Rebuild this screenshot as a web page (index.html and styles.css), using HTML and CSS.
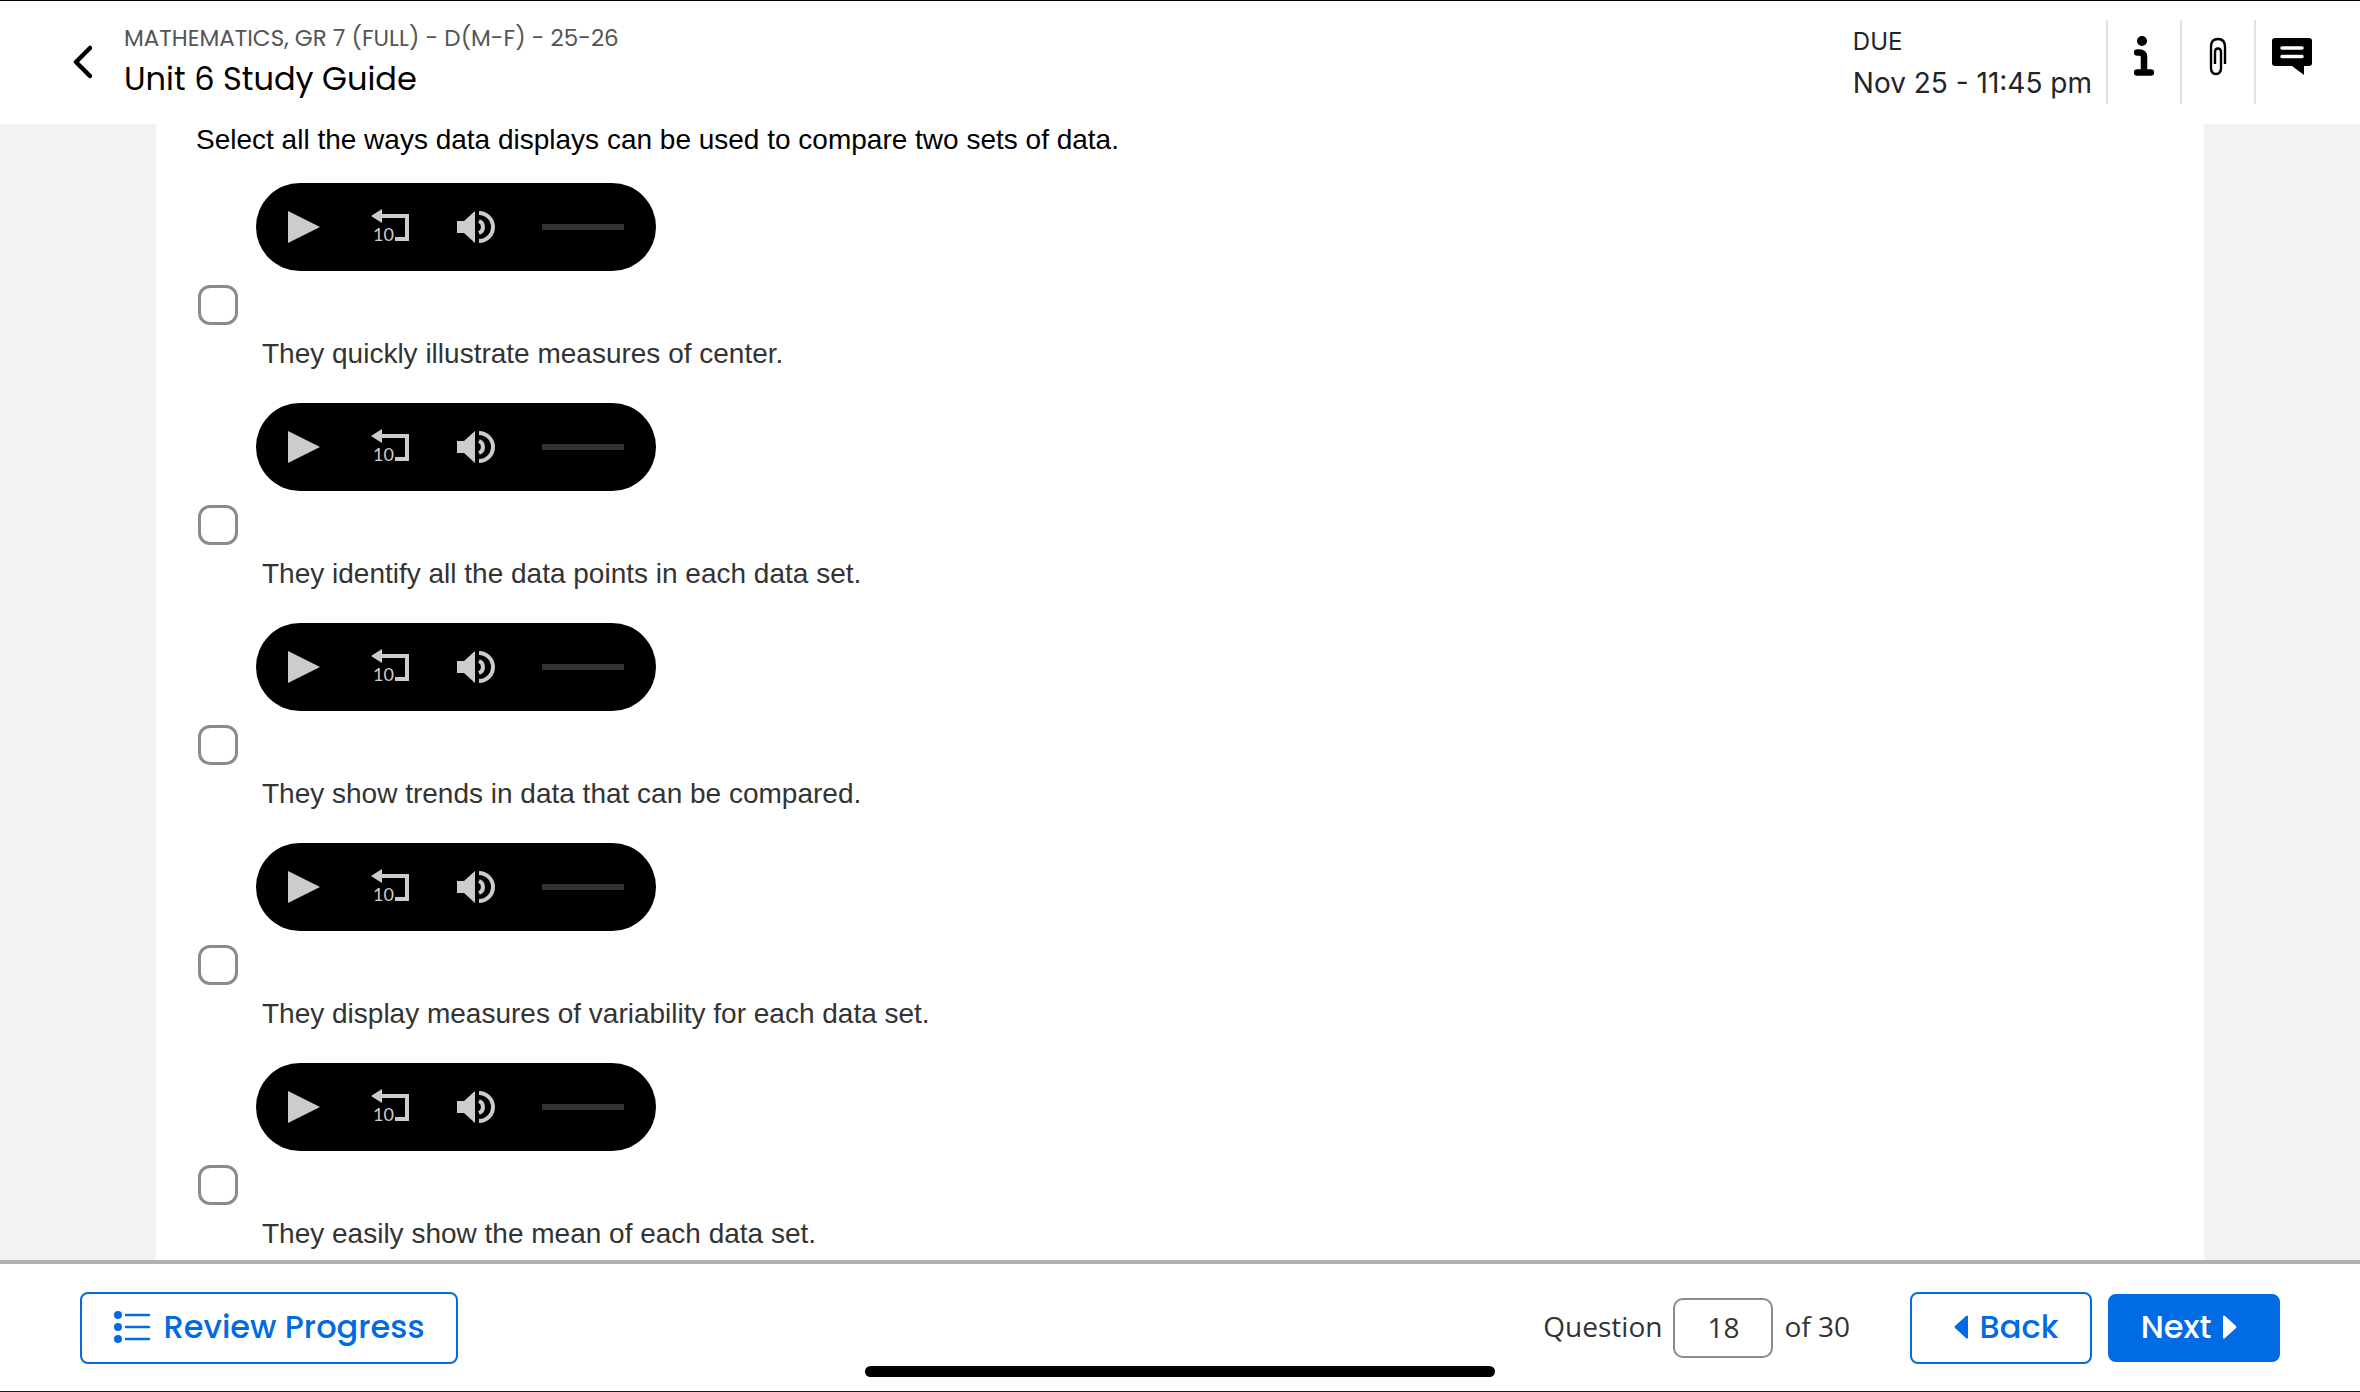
FILE: index.html
```html
<!DOCTYPE html>
<html lang="en">
<head>
  <meta charset="UTF-8">
  <meta name="viewport" content="width=device-width, initial-scale=1.0">
  <title>Unit 6 Study Guide</title>
  <link rel="stylesheet" href="styles.css">
</head>
<body>
  <!-- Icons shared by every audio player -->
  <svg class="sprite" aria-hidden="true">
    <symbol id="icon-play" viewBox="0 0 40 36"><path d="M4 2 L36 18 L4 34 Z"/></symbol>
    <symbol id="icon-rewind" viewBox="0 0 40 36">
      <path d="M1 7 L12 0 V5 H39 V32 H25 V28 H35 V9 H12 V14 Z"/>
      <text x="3" y="32" font-size="18">10</text>
    </symbol>
    <symbol id="icon-volume" viewBox="0 0 40 36">
      <path d="M1 12 H8 L19 2 V34 L8 24 H1 Z"/>
      <path class="wave" d="M23 12 A6.5 6.5 0 0 1 23 24 M23 4 A14 14 0 0 1 23 32"/>
    </symbol>
  </svg>

  <header class="topbar">
    <button type="button" class="icon-button close" aria-label="Go back">
      <svg width="24" height="36" viewBox="0 0 24 36"><path d="M22 4 L8 18 L22 32" fill="none" stroke="#000" stroke-width="4.500" stroke-linecap="round" stroke-linejoin="round"/></svg>
    </button>
    <div class="titles">
      <p class="course">MATHEMATICS, GR 7 (FULL) - D(M-F) - 25-26</p>
      <h1>Unit 6 Study Guide</h1>
    </div>
    <div class="due">
      <p class="due-label">DUE</p>
      <p class="due-date">Nov 25 - 11:45 pm</p>
    </div>
    <nav class="tools">
      <button type="button" class="icon-button tool" aria-label="Information">
        <svg width="20" height="40" viewBox="0 0 20 40"><circle cx="8" cy="5" r="5"/><path d="M3 16.500 H5 Q10 16.500 10 21 V36 M3 36.500 H17" fill="none" stroke="#000" stroke-width="6.500" stroke-linecap="round"/></svg>
      </button>
      <button type="button" class="icon-button tool" aria-label="Attachments">
        <svg width="20" height="40" viewBox="0 0 20 40"><path d="M7 28 V16 Q7 12.500 10 12.500 Q13 12.500 13 16 V32 Q13 38 8 38 Q3 38 3 32 V11 Q3 3 10 3 Q17 3 17 11 V28" fill="none" stroke="#000" stroke-width="2.400"/></svg>
      </button>
      <button type="button" class="icon-button tool" aria-label="Comments">
        <svg width="40" height="40" viewBox="0 0 40 40"><path d="M3 2 H37 Q40 2 40 5 V27 Q40 30 37 30 H32 V39 L20 30 H3 Q0 30 0 27 V5 Q0 2 3 2 Z"/><path d="M10 12 H30 M10 20.500 H30" stroke="#fff" stroke-width="3.500" stroke-linecap="round"/></svg>
      </button>
    </nav>
  </header>

  <main class="content">
    <p class="prompt" id="prompt">Select all the ways data displays can be used to compare two sets of data.</p>
    <ul class="options" aria-labelledby="prompt">
      <li class="option">
        <div class="player">
          <button type="button" aria-label="Play"><svg><use href="#icon-play"/></svg></button>
          <button type="button" aria-label="Back 10 seconds"><svg><use href="#icon-rewind"/></svg></button>
          <button type="button" aria-label="Volume"><svg><use href="#icon-volume"/></svg></button>
          <progress value="0" max="100" aria-label="Position"></progress>
        </div>
        <input type="checkbox" id="option1">
        <label for="option1">They quickly illustrate measures of center.</label>
      </li>
      <li class="option">
        <div class="player">
          <button type="button" aria-label="Play"><svg><use href="#icon-play"/></svg></button>
          <button type="button" aria-label="Back 10 seconds"><svg><use href="#icon-rewind"/></svg></button>
          <button type="button" aria-label="Volume"><svg><use href="#icon-volume"/></svg></button>
          <progress value="0" max="100" aria-label="Position"></progress>
        </div>
        <input type="checkbox" id="option2">
        <label for="option2">They identify all the data points in each data set.</label>
      </li>
      <li class="option">
        <div class="player">
          <button type="button" aria-label="Play"><svg><use href="#icon-play"/></svg></button>
          <button type="button" aria-label="Back 10 seconds"><svg><use href="#icon-rewind"/></svg></button>
          <button type="button" aria-label="Volume"><svg><use href="#icon-volume"/></svg></button>
          <progress value="0" max="100" aria-label="Position"></progress>
        </div>
        <input type="checkbox" id="option3">
        <label for="option3">They show trends in data that can be compared.</label>
      </li>
      <li class="option">
        <div class="player">
          <button type="button" aria-label="Play"><svg><use href="#icon-play"/></svg></button>
          <button type="button" aria-label="Back 10 seconds"><svg><use href="#icon-rewind"/></svg></button>
          <button type="button" aria-label="Volume"><svg><use href="#icon-volume"/></svg></button>
          <progress value="0" max="100" aria-label="Position"></progress>
        </div>
        <input type="checkbox" id="option4">
        <label for="option4">They display measures of variability for each data set.</label>
      </li>
      <li class="option">
        <div class="player">
          <button type="button" aria-label="Play"><svg><use href="#icon-play"/></svg></button>
          <button type="button" aria-label="Back 10 seconds"><svg><use href="#icon-rewind"/></svg></button>
          <button type="button" aria-label="Volume"><svg><use href="#icon-volume"/></svg></button>
          <progress value="0" max="100" aria-label="Position"></progress>
        </div>
        <input type="checkbox" id="option5">
        <label for="option5">They easily show the mean of each data set.</label>
      </li>
    </ul>
  </main>

  <footer class="bottombar">
    <button type="button" class="btn review">
      <svg width="38" height="32" viewBox="0 0 38 32"><circle cx="4" cy="4" r="4"/><circle cx="4" cy="16" r="4"/><circle cx="4" cy="28" r="4"/><path d="M12 4 H35 M12 16 H35 M12 28 H35" stroke="currentColor" stroke-width="2.600" stroke-linecap="round"/></svg>
      Review Progress
    </button>
    <div class="pager">
      <label for="question">Question</label>
      <input type="text" id="question" value="18">
      <span>of 30</span>
    </div>
    <button type="button" class="btn back">
      <svg width="14" height="24" viewBox="0 0 14 24"><path d="M14 1 V23 Q13 24 12 23 L1 13 Q0 12 1 11 L12 1 Q13 0 14 1 Z"/></svg>
      Back
    </button>
    <button type="button" class="btn next">
      Next
      <svg width="14" height="24" viewBox="0 0 14 24"><path d="M0 1 V23 Q1 24 2 23 L13 13 Q14 12 13 11 L2 1 Q1 0 0 1 Z"/></svg>
    </button>
    <div class="home-indicator"></div>
  </footer>
</body>
</html>
```

FILE: styles.css
```css
* {
  box-sizing: border-box;
}
body {
  margin: 0;
  height: 100vh;
  display: flex;
  flex-direction: column;
  background-color: #f2f2f2;
  font-family: "Liberation Sans", Arial, sans-serif;
  font-size: 28px;
  color: #333;
}
p, h1, ul {
  margin: 0;
  padding: 0;
}
button {
  font-family: inherit;
  cursor: pointer;
}
.sprite {
  display: none;
}

/* Top bar */
.topbar {
  flex: none;
  display: flex;
  align-items: flex-start;
  padding: 19px 32px 20px 68px;
  border-top: 1px solid #000;
  background-color: #fff;
}
.icon-button {
  padding: 0;
  border: none;
  background: none;
}
.close {
  width: 56px;
  height: 84px;
}
.close svg {
  display: block;
}
.titles {
  flex: 1;
  font-family: Poppins, Inter, sans-serif;
}
.course {
  font-size: 23px;
  line-height: 36px;
  color: #555;
}
h1 {
  font-size: 32px;
  font-weight: 400;
  line-height: 46px;
  color: #000;
}
.due {
  padding-right: 14px;
  font-family: Inter, sans-serif;
  color: #212529;
}
.due-label {
  font-size: 24px;
  line-height: 44px;
}
.due-date {
  font-size: 28px;
  line-height: 38px;
}
.tools {
  display: flex;
}
.tool {
  width: 74px;
  height: 84px;
  padding-bottom: 12px;
  border-left: 2px solid #e2e2e2;
}
.tool svg {
  display: block;
  margin: 0 auto;
}

/* Question */
.content {
  flex: 1;
  min-height: 0;
  overflow: hidden;
  margin: 0 156px;
  padding: 0 40px;
  background-color: #fff;
}
.prompt {
  margin-bottom: 27px;
  line-height: 32px;
  color: #000;
}
.options {
  list-style: none;
}
.option {
  margin-bottom: 29px;
}
.option input {
  appearance: none;
  display: block;
  width: 40px;
  height: 40px;
  margin: 14px 2px 9px;
  border: 3px solid #8a8a8f;
  border-radius: 12px;
}
.option input:checked {
  background-color: #006be3;
}
.option label {
  display: block;
  margin-left: 66px;
  line-height: 40px;
}

/* Audio player */
.player {
  display: flex;
  align-items: center;
  gap: 46px;
  width: 400px;
  height: 88px;
  margin-left: 60px;
  padding: 0 28px;
  border-radius: 44px;
  background-color: #000;
}
.player button {
  width: 40px;
  height: 36px;
  padding: 0;
  border: none;
  background: none;
}
.player svg {
  display: block;
  width: 40px;
  height: 36px;
  fill: #ccc;
  font-family: Lato, sans-serif;
}
.wave {
  fill: none;
  stroke: #ccc;
  stroke-width: 4px;
}
.player progress {
  appearance: none;
  width: 82px;
  height: 6px;
  border: none;
  background-color: #333;
}
.player progress::-webkit-progress-bar {
  background-color: #333;
}
.player progress::-webkit-progress-value {
  background-color: #ccc;
}

/* Bottom bar */
.bottombar {
  flex: none;
  position: relative;
  display: flex;
  align-items: center;
  padding: 28px 80px 27px;
  border-top: 4px solid #b0b0b0;
  border-bottom: 1px solid #1c1c1e;
  background-color: #fff;
}
.btn {
  display: flex;
  align-items: center;
  justify-content: center;
  gap: 12px;
  height: 72px;
  padding: 0 0 2px;
  border: 2px solid #006be3;
  border-radius: 8px;
  background-color: #fff;
  font-family: Poppins, Inter, sans-serif;
  font-size: 32px;
  font-weight: 500;
  color: #006be3;
}
.btn svg {
  flex: none;
  fill: currentColor;
}
.review {
  width: 378px;
}
.back {
  width: 182px;
  margin-right: 16px;
  padding-left: 10px;
}
.next {
  width: 172px;
  height: 68px;
  padding-right: 10px;
  background-color: #006be3;
  color: #fff;
}
.pager {
  display: flex;
  align-items: center;
  gap: 11px;
  margin-left: auto;
  margin-right: 60px;
  font-family: "Open Sans", sans-serif;
}
.pager label,
.pager span {
  padding-bottom: 4px;
}
.pager input {
  width: 100px;
  height: 60px;
  padding: 0 0 2px;
  border: 2px solid #8a8a8f;
  border-radius: 10px;
  background-color: #fff;
  font: inherit;
  color: inherit;
  text-align: center;
}
.home-indicator {
  position: absolute;
  bottom: 14px;
  left: 50%;
  width: 630px;
  height: 11px;
  margin-left: -315px;
  border-radius: 6px;
  background-color: #000;
}
```
